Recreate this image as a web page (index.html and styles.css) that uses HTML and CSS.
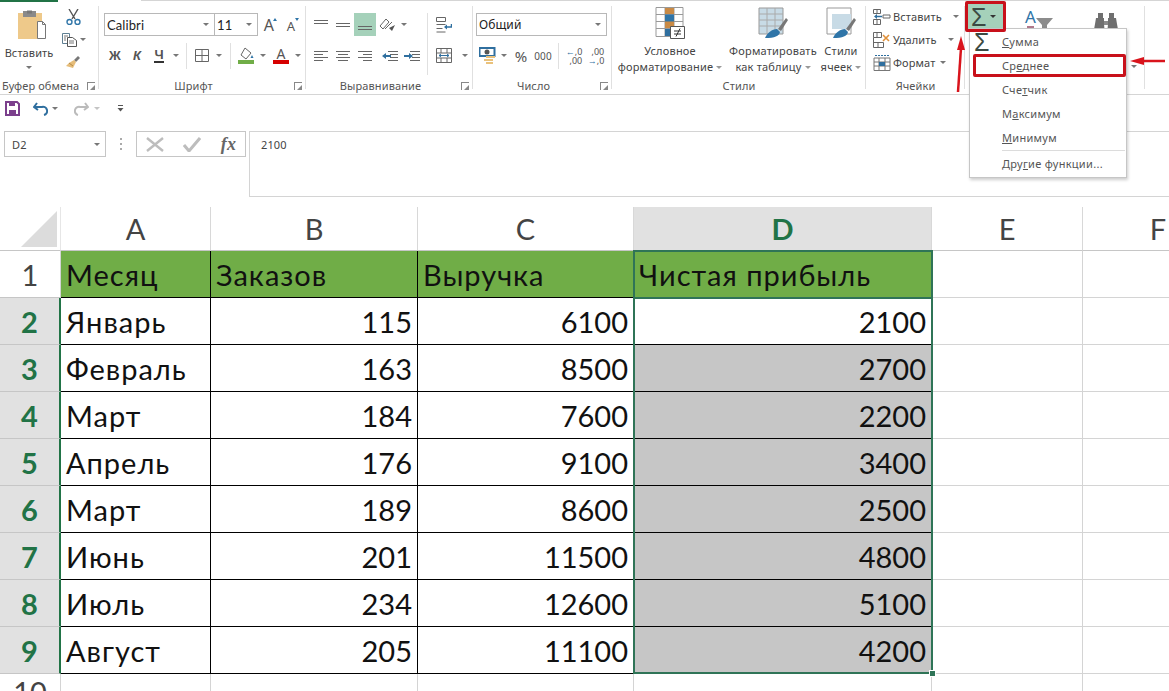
FILE: index.html
```html
<!DOCTYPE html>
<html lang="ru">
<head>
<meta charset="utf-8">
<title>Excel</title>
<link rel="stylesheet" href="styles.css">
</head>
<body>
<div class="page">
  <div class="tabline"><span class="tab-green"></span><span class="tab-gap"></span><span class="tab-gray"></span></div>
  <div class="ribbon">
    <section class="group g-clip">
      <div class="content clip">
        <div class="paste">
          <svg class="paste-icon" width="28" height="30" viewBox="0 0 28 30"><path d="M0 3h24v26H0z" fill="#eec98a"/><path d="M5 1h13v6H5z" fill="#8a8a8a"/><path d="M9 .5h5v3H9z" fill="#777"/><path d="M19.500 11.500h5l3 3v14h-8z" fill="#fff" stroke="#777"/><path d="M24.500 11.500v3h3" fill="none" stroke="#777"/></svg>
          <span class="paste-text">Вставить</span>
          <i class="caret paste-caret"></i>
        </div>
        <div class="clip-mini">
          <div class="tool t30"><svg width="15" height="16" viewBox="0 0 15 16"><path d="M3 0l6 10M12 0L6 10" stroke="#555" stroke-width="1.4" fill="none"/><circle cx="3.5" cy="13" r="2.5" fill="none" stroke="#2f75a8" stroke-width="1.4"/><circle cx="11.5" cy="13" r="2.5" fill="none" stroke="#2f75a8" stroke-width="1.4"/></svg></div>
          <div class="tool-row"><div class="tool t22"><svg width="15" height="14" viewBox="0 0 15 14"><path d="M.5.5h7v10h-7z" fill="#fff" stroke="#5f7f92"/><path d="M5.5 4.5h5l4 3v6h-9z" fill="#fff" stroke="#555"/><path d="M2 3h4M2 5h2M2 7h2M7 8h5M7 10h5" stroke="#777"/></svg></div><i class="caret"></i></div>
          <div class="tool t30"><svg width="16" height="15" viewBox="0 0 16 15"><path d="M9 5l4-4 2 2-4 4z" fill="#777"/><path d="M9 5l2 2-3 6-7-2 3-3z" fill="#e6bd7a"/><path d="M4 8l4 3" stroke="#b58b45"/></svg></div>
        </div>
      </div>
      <div class="glabel glabel-left"><span>Буфер обмена</span><i class="launcher"></i></div>
    </section>

    <section class="group g-font">
      <div class="content pad-font">
        <div class="row">
          <div class="combo c-font"><span>Calibri</span><i class="caret"></i></div>
          <div class="combo c-size"><span>11</span><i class="caret"></i></div>
          <div class="tool t22"><span class="big-a">A</span><i class="tiny-up"></i></div>
          <div class="tool t22"><span class="small-a">A</span><i class="tiny-down"></i></div>
        </div>
        <div class="row row2">
          <div class="tool t22"><b class="bi">Ж</b></div>
          <div class="tool t22"><b class="bi it">К</b></div>
          <div class="tool t22"><b class="bi ul">Ч</b></div>
          <div class="tool t11"><i class="caret"></i></div>
          <i class="sep"></i>
          <div class="tool t22"><svg width="14" height="13" viewBox="0 0 14 13"><path d="M.5.5h13v12H.5zM7 .5v12M.5 6.500h13" fill="none" stroke="#666"/></svg></div>
          <div class="tool t12"><i class="caret"></i></div>
          <i class="sep"></i>
          <div class="tool t22"><svg width="17" height="17" viewBox="0 0 17 17"><path d="M7 1l6 5-5 6-5-4z" fill="#fff" stroke="#666"/><path d="M14 8l1.500 3h-3z" fill="#2f75a8"/><path d="M0 13h16v4H0z" fill="#70ad47"/></svg></div>
          <div class="tool t11"><i class="caret"></i></div>
          <div class="tool t22 ml2"><span class="color-a">A<i></i></span></div>
          <div class="tool t11"><i class="caret"></i></div>
        </div>
      </div>
      <div class="glabel"><span class="gl-mid">Шрифт</span><i class="launcher"></i></div>
    </section>

    <section class="group g-align">
      <div class="content pad-align">
        <div class="align-left">
          <div class="row">
            <div class="tool t22"><svg class="ln" width="14" height="12" viewBox="0 0 14 12"><path d="M0 1.500h14M0 4.500h14"/></svg></div>
            <div class="tool t22"><svg class="ln" width="14" height="12" viewBox="0 0 14 12"><path d="M0 4.500h14M0 7.500h14"/></svg></div>
            <div class="tool t22 on"><svg class="ln" width="14" height="12" viewBox="0 0 14 12"><path d="M0 7.500h14M0 10.500h14"/></svg></div>
            <div class="tool t22"><svg width="16" height="15" viewBox="0 0 16 15"><path d="M1 9l6-7 3 3-6 7zM6 12l7-7" fill="none" stroke="#666"/><path d="M10 11l6-3-3 6z" fill="#555"/></svg></div>
            <div class="tool t12"><i class="caret"></i></div>
          </div>
          <div class="row row2">
            <div class="tool t22"><svg class="ln" width="14" height="10" viewBox="0 0 14 10"><path d="M0 .5h14M0 3.500h9M0 6.500h14M0 9.500h9"/></svg></div>
            <div class="tool t22"><svg class="ln" width="14" height="10" viewBox="0 0 14 10"><path d="M0 .5h14M2 3.500h10M0 6.500h14M2 9.500h10"/></svg></div>
            <div class="tool t22"><svg class="ln" width="14" height="10" viewBox="0 0 14 10"><path d="M0 .5h14M5 3.500h9M0 6.500h14M5 9.500h9"/></svg></div>
            <div class="tool t22 ml3"><svg width="16" height="10" viewBox="0 0 16 10"><path d="M6 .5h10M8 3.500h8M8 6.500h8M6 9.500h10" fill="none" stroke="#666"/><path d="M0 5l4-3v2h5v2H4v2z" fill="#2f6f9f"/></svg></div>
            <div class="tool t22"><svg width="16" height="10" viewBox="0 0 16 10"><path d="M6 .5h10M8 3.500h8M8 6.500h8M6 9.500h10" fill="none" stroke="#666"/><path d="M9 5L5 2v2H0v2h5v2z" fill="#2f6f9f"/></svg></div>
          </div>
        </div>
        <i class="sep sep-tall"></i>
        <div class="align-right">
          <div class="row"><div class="tool t30"><svg width="16" height="16" viewBox="0 0 16 16"><path d="M.5.5h9v4h-9zM.5 7.500h9M.5 11.500h6M.5 15h9" fill="none" stroke="#666"/><path d="M15.500 7v3H10" fill="none" stroke="#2f6f9f" stroke-width="1.500"/><path d="M8 10l3-2.500v5z" fill="#2f6f9f"/></svg></div></div>
          <div class="row row2"><div class="tool t30"><svg width="16" height="15" viewBox="0 0 16 15"><path d="M.5.5h15v14H.5zM.5 5h15M.5 10h15M5 .5V5M11 .5V5M5 10v4.500M11 10v4.500" fill="none" stroke="#666"/><path d="M3 7.500h10M3 7.500l2-1.500M3 7.500L5 9M13 7.500L11 6M13 7.500L11 9" fill="none" stroke="#2f6f9f"/></svg></div><div class="tool t12"><i class="caret"></i></div></div>
        </div>
      </div>
      <div class="glabel"><span class="gl-mid">Выравнивание</span><i class="launcher"></i></div>
    </section>

    <section class="group g-num">
      <div class="content pad-num">
        <div class="row"><div class="combo c-num"><span>Общий</span><i class="caret"></i></div></div>
        <div class="row row2">
          <div class="tool t22"><svg width="17" height="17" viewBox="0 0 17 17"><path d="M.5 1h15v8H.5z" fill="#fff" stroke="#2f6f9f" stroke-width="2"/><circle cx="8" cy="5" r="2.500" fill="#555"/><path d="M7 9h9v2H7zM5 12h9v2H5zM7 15h7v2H7z" fill="#eac27c"/></svg></div>
          <div class="tool t11"><i class="caret"></i></div>
          <div class="tool t22 ml1"><span class="pct">%</span></div>
          <div class="tool t22"><span class="thou">000</span></div>
          <i class="sep sep-n"></i>
          <div class="tool t22"><span class="dec"><b>←</b>,0<br>,00</span></div>
          <div class="tool t22"><span class="dec">,00<br><b>→</b>,0</span></div>
        </div>
      </div>
      <div class="glabel"><span class="gl-mid">Число</span><i class="launcher"></i></div>
    </section>

    <section class="group g-styles">
      <div class="content styles">
        <div class="big b1">
          <svg width="30" height="32" viewBox="0 0 30 32"><path d="M1 .5h27v29H1zM1 7.500h27M1 14.500h27M1 21.500h18M10 .5v29M19 .5v20" fill="none" stroke="#999"/><path d="M10 1h9v6h-9zM10 14h9v7h-9z" fill="#c98a45"/><path d="M10 7.500h9v7h-9z" fill="#2f75a8"/><path d="M10 22h5v7h-5z" fill="#2f6f9f"/><path d="M15.500 19.500h14v12h-14z" fill="#fff" stroke="#555"/><path d="M19 24h7M19 27h7M25 21.500l-4 8" stroke="#333" fill="none"/></svg>
          <span>Условное</span>
          <span>форматирование<i class="caret cl"></i></span>
        </div>
        <div class="big b2">
          <svg width="30" height="32" viewBox="0 0 30 32"><path d="M1 1h24v26H1z" fill="#c8dbe6" stroke="#999"/><path d="M1 7h24M1 13h24M1 19h24M9 1v26M17 1v26" stroke="#aaa" fill="none"/><path d="M20 22l8-11 2 2-7 11z" fill="#777"/><path d="M7 31c2-5 7-9 12-9l3 3c-1 4-5 6-15 6z" fill="#2f75a8"/></svg>
          <span>Форматировать</span>
          <span>как таблицу<i class="caret cl"></i></span>
        </div>
        <div class="big b3">
          <svg width="30" height="32" viewBox="0 0 30 32"><path d="M1 1h24v26H1z" fill="#fff" stroke="#999"/><path d="M6 7h19v15H6z" fill="#c8dbe6"/><path d="M20 22l8-11 2 2-7 11z" fill="#777"/><path d="M7 31c2-5 7-9 12-9l3 3c-1 4-5 6-15 6z" fill="#2f75a8"/></svg>
          <span>Стили</span>
          <span>ячеек<i class="caret cl"></i></span>
        </div>
      </div>
      <div class="glabel glabel-c"><span>Стили</span></div>
    </section>

    <section class="group g-cells">
      <div class="content cells">
        <div class="cell-row"><svg width="18" height="16" viewBox="0 0 18 16"><path d="M.5.5h7v4h-7zM.5 10.500h7v5h-7zM4 .5v4M4 10.500v5M10 6h7v3h-7z" fill="none" stroke="#666"/><path d="M3 7.500h6" stroke="#2f6f9f" stroke-width="1.500"/><path d="M1 7.500l3-2.500v5z" fill="#2f6f9f"/></svg><span>Вставить</span><i class="caret m-ins"></i></div>
        <div class="cell-row"><svg width="18" height="16" viewBox="0 0 18 16"><path d="M.5.5h8v5h-8zM.5 5.500v10h10v-5h-10M4 .5v5M5 10.500v5" fill="none" stroke="#666"/><path d="M10 3l6 6M16 3l-6 6" stroke="#e0913a" stroke-width="1.600"/></svg><span>Удалить</span><i class="caret m-del"></i></div>
        <div class="cell-row"><svg width="18" height="16" viewBox="0 0 18 16"><path d="M1 3h16v12.500H1zM1 7h16M1 11h16M6 3v12.500M12 3v12.500" fill="none" stroke="#777"/><path d="M6 7h6v4H6z" fill="#2f6f9f"/><path d="M2 .5h14" stroke="#2f6f9f" stroke-dasharray="2 1"/></svg><span>Формат</span><i class="caret m-fmt"></i></div>
      </div>
      <div class="glabel glabel-c"><span>Ячейки</span></div>
    </section>

    <section class="group g-edit">
      <div class="content edit">
        <div class="sigma-btn"><span class="sigma">Σ</span><i class="caret caret-dark"></i></div>
        <div class="sort"><span class="sort-a">A</span><i class="sort-b"></i><svg width="17" height="13" viewBox="0 0 17 13"><path d="M0 0h17l-6 7v6H6V7z" fill="#8c8c8c"/></svg></div>
        <div class="find"><svg width="26" height="22" viewBox="0 0 26 22"><path d="M5 0h5v5H5zM16 0h5v5h-5zM3 5h8v6l1 11H0l2-11zM15 5h8l1 6 2 11H14l1-11z" fill="#6f6f6f"/><path d="M11 8h4v4h-4z" fill="#8a8a8a"/></svg></div>
      </div>
    </section>
    <div class="ribbon-rest"></div>
  </div>

  <div class="qat">
    <svg class="q-save" width="15" height="15" viewBox="0 0 15 15"><path d="M1 1h11l2 2v11H1z" fill="none" stroke="#7b3f8c" stroke-width="2"/><path d="M4 1h6v4H4zM4 9h7v5H4z" fill="#7b3f8c"/></svg>
    <svg class="q-undo" width="15" height="15" viewBox="0 0 15 15"><path d="M4 2L1 6l4 3" fill="none" stroke="#2f6f9f" stroke-width="2"/><path d="M2 6h7a4 4 0 0 1 2 8" fill="none" stroke="#2f6f9f" stroke-width="2"/></svg>
    <i class="caret q-c1"></i>
    <svg class="q-redo" width="15" height="15" viewBox="0 0 15 15"><path d="M11 2l3 4-4 3" fill="none" stroke="#bbb" stroke-width="2"/><path d="M13 6H6a4 4 0 0 0-2 8" fill="none" stroke="#bbb" stroke-width="2"/></svg>
    <i class="caret caret-light q-c2"></i>
    <svg class="q-more" width="7" height="7" viewBox="0 0 7 7"><path d="M1 .5h5" stroke="#555"/><path d="M.5 3h6l-3 3.500z" fill="#555"/></svg>
  </div>

  <div class="formula">
    <div class="namebox"><span>D2</span><i class="caret"></i></div>
    <div class="grip"><i></i><i></i><i></i></div>
    <div class="fbtns">
      <svg width="18" height="15" viewBox="0 0 18 15"><path d="M1 1l16 13M17 1L1 14" stroke="#bdbdbd" stroke-width="2.400"/></svg>
      <svg width="18" height="15" viewBox="0 0 18 15"><path d="M1 8l5 6L17 1" fill="none" stroke="#bdbdbd" stroke-width="3"/></svg>
      <span class="fx">fx</span>
    </div>
    <div class="finput">2100</div>
  </div>

  <div class="sheet">
    <div class="corner"><svg width="36" height="36" viewBox="0 0 36 36"><path d="M36 0v36H0z" fill="#dcdcdc"/></svg></div>
    <div class="ch">A</div><div class="ch">B</div><div class="ch">C</div><div class="ch ch-on">D</div><div class="ch">E</div><div class="ch">F</div>

    <div class="rh rh-plain">1</div>
    <div class="c hd">Месяц</div><div class="c hd">Заказов</div><div class="c hd">Выручка</div><div class="c hd">Чистая прибыль</div><div class="g"></div><div class="g"></div>

    <div class="rh">2</div><div class="c t">Январь</div><div class="c n">115</div><div class="c n">6100</div><div class="c n">2100</div><div class="g"></div><div class="g"></div>
    <div class="rh">3</div><div class="c t">Февраль</div><div class="c n">163</div><div class="c n">8500</div><div class="c n s">2700</div><div class="g"></div><div class="g"></div>
    <div class="rh">4</div><div class="c t">Март</div><div class="c n">184</div><div class="c n">7600</div><div class="c n s">2200</div><div class="g"></div><div class="g"></div>
    <div class="rh">5</div><div class="c t">Апрель</div><div class="c n">176</div><div class="c n">9100</div><div class="c n s">3400</div><div class="g"></div><div class="g"></div>
    <div class="rh">6</div><div class="c t">Март</div><div class="c n">189</div><div class="c n">8600</div><div class="c n s">2500</div><div class="g"></div><div class="g"></div>
    <div class="rh">7</div><div class="c t">Июнь</div><div class="c n">201</div><div class="c n">11500</div><div class="c n s">4800</div><div class="g"></div><div class="g"></div>
    <div class="rh">8</div><div class="c t">Июль</div><div class="c n">234</div><div class="c n">12600</div><div class="c n s">5100</div><div class="g"></div><div class="g"></div>
    <div class="rh">9</div><div class="c t">Август</div><div class="c n">205</div><div class="c n">11100</div><div class="c n s">4200</div><div class="g"></div><div class="g"></div>
    <div class="rh rh-plain">10</div><div class="g"></div><div class="g"></div><div class="g"></div><div class="g"></div><div class="g"></div><div class="g"></div>

    <div class="selection"><i class="sel-line"></i><i class="sel-handle"></i></div>
  </div>

  <div class="menu">
    <div class="mi mi-sum"><span class="msigma">Σ</span><span><u>С</u>умма</span></div>
    <div class="mi"><span>Ср<u>е</u>днее</span></div>
    <div class="mi"><span>Сче<u>т</u>чик</span></div>
    <div class="mi"><span>М<u>а</u>ксимум</span></div>
    <div class="mi"><span><u>М</u>инимум</span></div>
    <div class="msep"></div>
    <div class="mi mi-last"><span>Дру<u>г</u>ие функции...</span></div>
  </div>
  <i class="rest-caret"></i>
  <div class="mark mark-sigma"></div>
  <div class="mark mark-avg"></div>
  <svg class="arrows" width="1169" height="100" viewBox="0 0 1169 100"><path d="M958 92L961 48" stroke="#d9141c" stroke-width="2.500" fill="none"/><path d="M961 36l-4 14h8z" fill="#d9141c"/><path d="M1165 61h-24" stroke="#d9141c" stroke-width="2.500" fill="none"/><path d="M1130 61l14-4v8z" fill="#d9141c"/></svg>
</div>
</body>
</html>
```

FILE: styles.css
```css
* { box-sizing: border-box; }
html, body { margin: 0; padding: 0; background: #fff; }
body { width: 1169px; height: 691px; overflow: hidden; font-family: "Noto Sans", "Open Sans", sans-serif; font-size: 11px; color: #444; letter-spacing: .1px; }
i { display: block; font-style: normal; }
.page { position: relative; width: 1169px; height: 691px; overflow: hidden; }

.tabline { display: flex; height: 2px; }
.tab-green { width: 58px; background: #217346; }
.tab-gap { width: 83px; }
.tab-gray { flex: 1; border-top: 1px solid #d5d5d5; }

.ribbon { display: flex; height: 93px; border-bottom: 1px solid #d5d5d5; }
.group { display: flex; flex-direction: column; position: relative; }
.group::after { content: ""; position: absolute; right: 0; top: 4px; bottom: 5px; width: 1px; background: #e0e0e0; }
.content { flex: 1; min-height: 0; }
.glabel { display: grid; grid-template-columns: 1fr auto 1fr; align-items: center; height: 16px; color: #555; line-height: 16px; }
.gl-mid { grid-column: 2; margin-right: 18px; }
.glabel .launcher { grid-column: 3; justify-self: end; margin-right: 4px; }
.glabel-left { grid-template-columns: auto 1fr; padding-left: 2px; }
.glabel-left .launcher { grid-column: 2; }
.glabel-c { display: block; text-align: center; }
.launcher { width: 8px; height: 8px; border-left: 1px solid #888; border-top: 1px solid #888; position: relative; }
.launcher::after { content: ""; position: absolute; right: 0; bottom: 0; border-style: solid; border-width: 0 0 5px 5px; border-color: transparent transparent #888 transparent; }

.g-clip { width: 99px; }
.g-font { width: 207px; }
.g-align { width: 167px; }
.g-num { width: 139px; }
.g-styles { width: 254px; }
.g-cells { width: 99px; }
.g-edit { width: 180px; }
.ribbon-rest { flex: 1; }

.caret { width: 0; height: 0; border-style: solid; border-width: 3px 3.500px 0 3.500px; border-color: #777 transparent transparent transparent; flex: none; }
.caret-dark { border-top-color: #333; }
.caret-light { border-top-color: #c4c4c4; }
.cl { display: inline-block; margin-left: 3px; vertical-align: 2px; border-top-color: #999; }

.tool { display: flex; align-items: center; justify-content: center; height: 23px; flex: none; position: relative; }
.t22 { width: 22px; }
.t30 { width: 30px; }
.t11 { width: 11px; }
.t12 { width: 12px; }
.ml1 { margin-left: 1px; }
.ml2 { margin-left: 2px; }
.ml3 { margin-left: 3px; }
.on { background: #a5d1ba; }
.row { display: flex; align-items: center; height: 23px; }
.row2 { margin-top: 8px; }
.sep { width: 1px; height: 26px; background: #e0e0e0; margin: 0 4px 0 5px; flex: none; }
.sep-tall { height: 62px; margin: 0; }
.sep-n { margin: 0 4px 0 4px; }

.clip { display: flex; }
.paste { width: 58px; display: flex; flex-direction: column; align-items: center; padding-top: 8px; }
.paste-icon { margin: 0 0 2px 6px; }
.paste-text { margin-top: 3px; line-height: 15px; }
.paste-caret { margin-top: 6px; }
.clip-mini { padding-top: 3px; display: flex; flex-direction: column; }
.tool-row { display: flex; align-items: center; }

.pad-font { padding: 11px 0 0 5px; }
.combo { display: flex; align-items: center; justify-content: space-between; height: 23px; border: 1px solid #b8b8b8; background: #fff; padding: 0 5px 0 2px; color: #222; font-size: 12px; flex: none; }
.c-font { width: 111px; font-family: "Lato", sans-serif; font-size: 13px; }
.c-size { width: 44px; margin-left: -1px; font-family: "Lato", sans-serif; font-size: 13px; }
.big-a { font-size: 16px; color: #555; }
.small-a { font-size: 13px; color: #555; margin-top: 2px; }
.tiny-up, .tiny-down { position: absolute; right: 3px; top: 5px; width: 0; height: 0; border-style: solid; border-color: transparent; }
.tiny-up { border-width: 0 2.500px 3px; border-bottom-color: #2f75a8; }
.tiny-down { border-width: 3px 2.500px 0; border-top-color: #2f75a8; }
.bi { font-family: "Liberation Sans", sans-serif; font-size: 13px; font-weight: 700; color: #555; }
.it { font-style: italic; }
.ul { border-bottom: 2px solid #333; line-height: 13px; }
.color-a { display: block; width: 16px; text-align: center; font-size: 14px; line-height: 13px; color: #555; }
.color-a i { height: 4px; background: #d60000; }

.pad-align { display: flex; padding: 11px 0 0 4px; }
.align-left { width: 117px; }
.align-right { padding-left: 1px; }
.ln { fill: none; stroke: #666; }

.pad-num { padding: 11px 0 0 3px; }
.c-num { width: 131px; font-size: 12px; }
.pct { font-size: 15px; color: #555; }
.thou { font-size: 10px; color: #555; }
.dec { display: block; font-size: 9px; line-height: 9px; color: #555; text-align: right; letter-spacing: 0; white-space: nowrap; }
.dec b { font-weight: 400; color: #2f6f9f; }

.styles { display: flex; padding-top: 5px; }
.big { display: flex; flex-direction: column; align-items: center; line-height: 16px; white-space: nowrap; letter-spacing: .2px; }
.big svg { margin-bottom: 4px; }
.b1 { width: 116px; }
.b2 { width: 90px; }
.b3 { width: 46px; }

.cells { padding: 3px 0 0 7px; }
.cell-row { display: flex; align-items: center; height: 23px; gap: 2px; }
.m-ins { margin-left: 9px; }
.m-del { margin-left: 9px; }
.m-fmt { margin-left: 3px; }

.edit { display: flex; }
.sigma-btn { display: flex; align-items: center; gap: 3px; width: 40px; height: 29px; margin-left: 1px; padding-left: 5px; background: #a5d1ba; }
.sigma { font-family: "Liberation Sans", sans-serif; font-size: 25px; line-height: 24px; color: #3b4a43; }
.sort { width: 28px; margin-left: 19px; padding-top: 16px; display: flex; flex-direction: column; align-items: flex-end; position: relative; }
.sort-a { position: absolute; left: 0; top: 6px; font-size: 17px; line-height: 18px; color: #2f75a8; }
.sort-b { position: absolute; left: 2px; top: 24px; width: 7px; height: 5px; background: #b0788c; }
.find { margin-left: 40px; padding-top: 11px; }

.qat { display: flex; align-items: center; height: 26px; padding-left: 5px; margin-bottom: 10px; }
.q-undo { margin-left: 13px; }
.q-c1 { margin-left: 4px; }
.q-redo { margin-left: 16px; }
.q-c2 { margin-left: 5px; }
.q-more { margin-left: 17px; }

.formula { display: flex; align-items: flex-start; height: 66px; padding-left: 4px; margin-bottom: 10px; }
.namebox { display: flex; align-items: center; justify-content: space-between; width: 102px; height: 26px; border: 1px solid #c6c6c6; padding: 0 5px 0 7px; }
.grip { width: 30px; height: 26px; display: flex; flex-direction: column; align-items: center; justify-content: center; gap: 3px; }
.grip i { width: 2px; height: 2px; background: #aaa; }
.fbtns { display: flex; align-items: center; justify-content: space-between; width: 110px; height: 26px; border: 1px solid #c6c6c6; padding: 0 9px 0 9px; }
.fx { font-family: "Liberation Serif", serif; font-style: italic; font-weight: 700; font-size: 18px; color: #666; }
.finput { flex: 1; height: 66px; margin-left: 3px; border: 1px solid #d4d4d4; border-right: 0; padding: 5px 11px; line-height: 15px; }

.sheet { position: relative; display: grid; grid-template-columns: 61px 150px 207px 216px 298px 151px 151px; grid-template-rows: 44px repeat(9, 47px); width: 1234px; font-family: "Lato", sans-serif; font-size: 29px; color: #111; letter-spacing: 0; }
.corner { display: flex; align-items: flex-end; justify-content: flex-end; padding: 0 3px 3px 0; border-right: 1px solid #e6e6e6; border-bottom: 1px solid #c6c6c6; }
.ch { display: flex; align-items: center; justify-content: center; color: #444; border-right: 1px solid #d8d8d8; border-bottom: 1px solid #c6c6c6; }
.ch-on { background: #e1e1e1; color: #217346; font-weight: 700; }
.rh { display: flex; align-items: center; justify-content: center; background: #e1e1e1; color: #217346; font-weight: 700; border-right: 2px solid #217346; border-bottom: 1px solid #c6c6c6; }
.rh-plain { background: #fff; color: #444; font-weight: 400; border-right: 1px solid #d4d4d4; }
.c { display: flex; align-items: center; padding: 0 5px 0 5px; border-right: 1px solid #000; border-bottom: 1px solid #000; white-space: nowrap; }
.hd, .t { letter-spacing: 1px; }
.hd { background: #70ad47; }
.n { justify-content: flex-end; }
.s { background: #c6c6c6; }
.g { border-right: 1px solid #d4d4d4; border-bottom: 1px solid #d4d4d4; }

.selection { position: absolute; left: 633px; top: 43px; width: 300px; height: 424px; border: 2px solid #2f7457; pointer-events: none; }
.sel-line { position: absolute; left: 0; right: 0; top: 45px; height: 2px; background: #2f7457; }
.sel-handle { position: absolute; right: -5px; bottom: -5px; width: 7px; height: 7px; background: #2f7457; border: 1px solid #fff; }

.menu { position: absolute; left: 969px; top: 28px; width: 158px; height: 150px; background: #fff; border: 1px solid #c6c6c6; box-shadow: 1px 2px 3px rgba(0,0,0,.2); color: #555; letter-spacing: .3px; }
.mi { display: flex; align-items: center; height: 24px; padding-left: 32px; position: relative; }
.msigma { position: absolute; left: 4px; top: 0; font-family: "Liberation Sans", sans-serif; font-size: 25px; line-height: 26px; color: #3b4a43; }
.msep { height: 1px; margin: 1px 1px 0 32px; background: #dcdcdc; }
.rest-caret { position: absolute; left: 1131px; top: 65px; width: 0; height: 0; border-style: solid; border-width: 3px 3.500px 0; border-color: #777 transparent transparent; }
.mark { position: absolute; border: 3px solid #c8101a; border-radius: 2px; }
.mark-sigma { left: 965px; top: 1px; width: 41px; height: 31px; }
.mark-avg { left: 973px; top: 54px; width: 153px; height: 23px; }
.arrows { position: absolute; left: 0; top: 0; pointer-events: none; }
```
